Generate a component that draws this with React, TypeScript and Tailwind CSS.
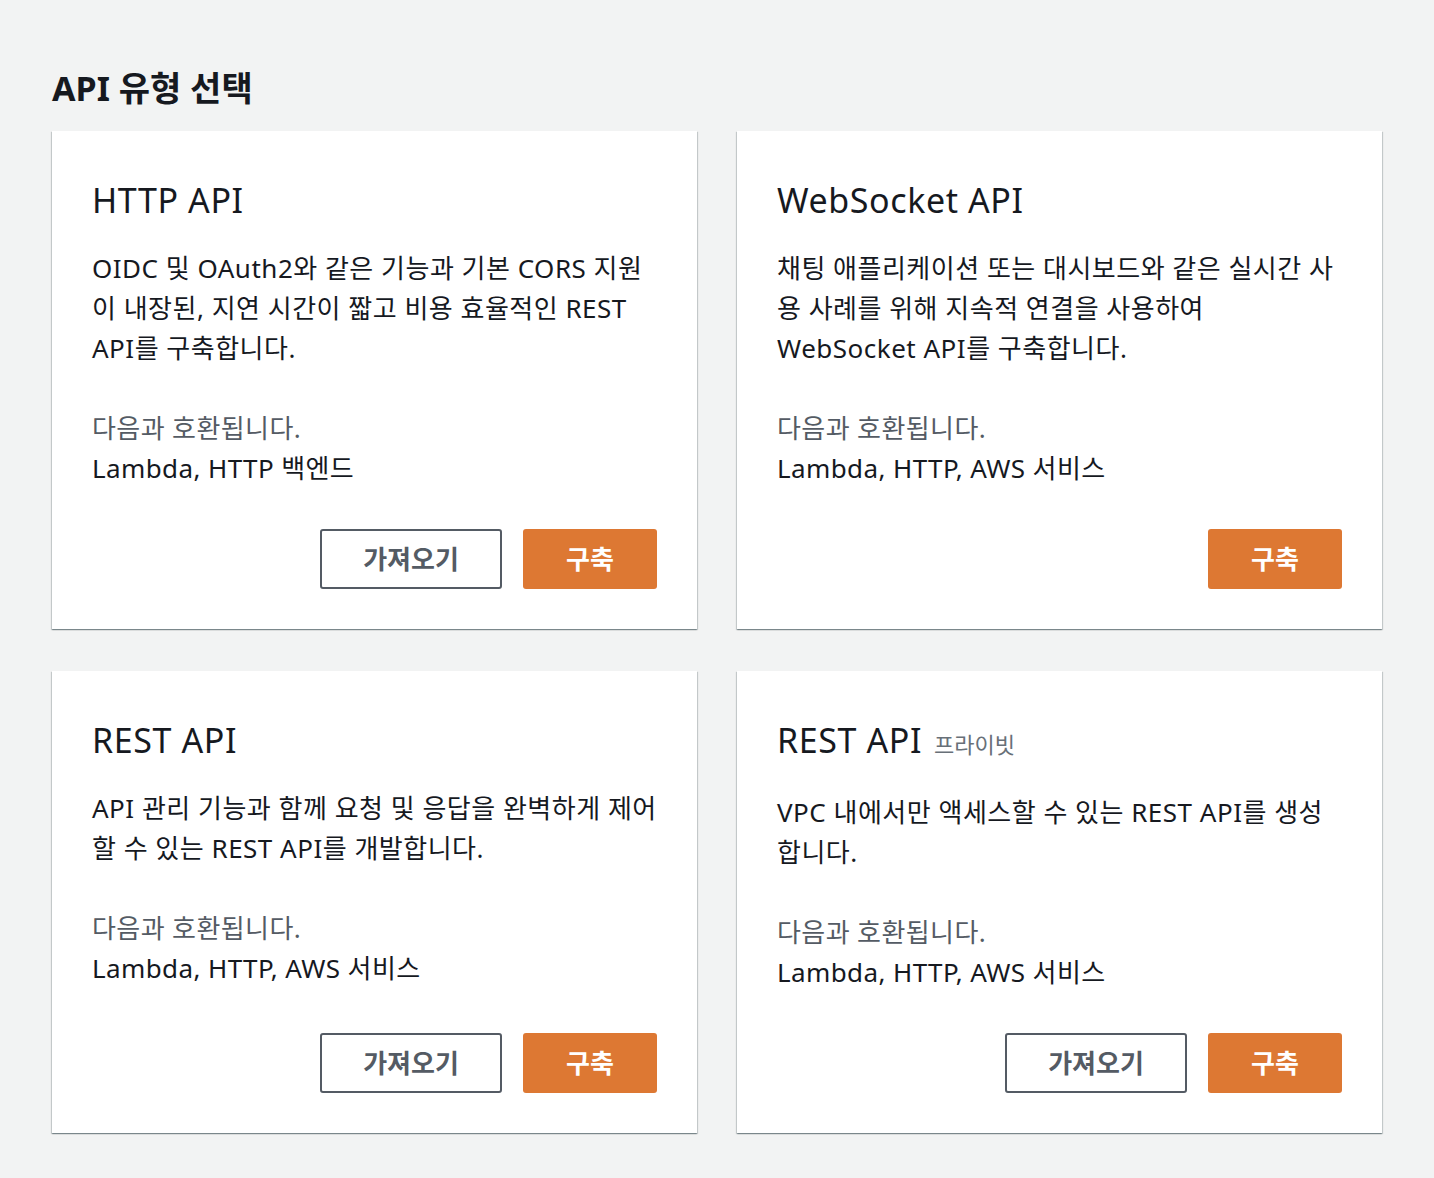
import React from "react";

type Card = {
  title: string;
  suffix?: string;
  description: string;
  compat: string;
  importable: boolean;
};

const cards: Card[] = [
  {
    title: "HTTP API",
    description:
      "OIDC 및 OAuth2와 같은 기능과 기본 CORS 지원이 내장된, 지연 시간이 짧고 비용 효율적인 REST API를 구축합니다.",
    compat: "Lambda, HTTP 백엔드",
    importable: true,
  },
  {
    title: "WebSocket API",
    description:
      "채팅 애플리케이션 또는 대시보드와 같은 실시간 사용 사례를 위해 지속적 연결을 사용하여 WebSocket API를 구축합니다.",
    compat: "Lambda, HTTP, AWS 서비스",
    importable: false,
  },
  {
    title: "REST API",
    description: "API 관리 기능과 함께 요청 및 응답을 완벽하게 제어할 수 있는 REST API를 개발합니다.",
    compat: "Lambda, HTTP, AWS 서비스",
    importable: true,
  },
  {
    title: "REST API",
    suffix: "프라이빗",
    description: "VPC 내에서만 액세스할 수 있는 REST API를 생성합니다.",
    compat: "Lambda, HTTP, AWS 서비스",
    importable: true,
  },
];

function ApiCard({ card }: { card: Card }) {
  return (
    <div className="flex flex-col bg-white p-10 shadow-[0_1px_1px_0_rgba(0,28,36,0.3),1px_1px_1px_0_rgba(0,28,36,0.15),-1px_1px_1px_0_rgba(0,28,36,0.15)]">
      <h2 className="text-[34px] leading-[58px] font-normal tracking-[0.6px] text-[#16191f]">
        {card.title}
        {card.suffix && (
          <span className="ml-3 text-[22px] tracking-normal text-[#687078]">{card.suffix}</span>
        )}
      </h2>
      <p className="mt-[19px] text-[26px] leading-[40px] tracking-[0.5px] text-[#16191f]">
        {card.description}
      </p>
      <div className="mt-10 text-[26px] leading-[40px] tracking-[0.4px]">
        <div className="text-[#545b64]">다음과 호환됩니다.</div>
        <div className="text-[#16191f]">{card.compat}</div>
      </div>
      <div className="mt-auto flex justify-end gap-[21px] pt-[41px]">
        {card.importable && (
          <button className="h-[60px] w-[182px] rounded-[3px] border-2 border-[#545b64] bg-white text-[26px] font-bold text-[#545b64]">
            가져오기
          </button>
        )}
        <button className="h-[60px] w-[134px] rounded-[3px] bg-[#dd7833] text-[26px] font-bold text-white">
          구축
        </button>
      </div>
    </div>
  );
}

export default function App() {
  return (
    <div
      className="min-h-[1178px] bg-[#f2f3f3] px-[52px] pt-[64px] pb-[45px]"
      style={{ fontFamily: '"Noto Sans", "Noto Sans CJK KR", sans-serif' }}
    >
      <h1 className="text-[34px] leading-[48px] font-bold text-[#16191f]">API 유형 선택</h1>
      <div className="mt-[19px] grid grid-cols-2 gap-x-10 gap-y-[42px]">
        {cards.map((c, i) => (
          <ApiCard key={i} card={c} />
        ))}
      </div>
    </div>
  );
}
